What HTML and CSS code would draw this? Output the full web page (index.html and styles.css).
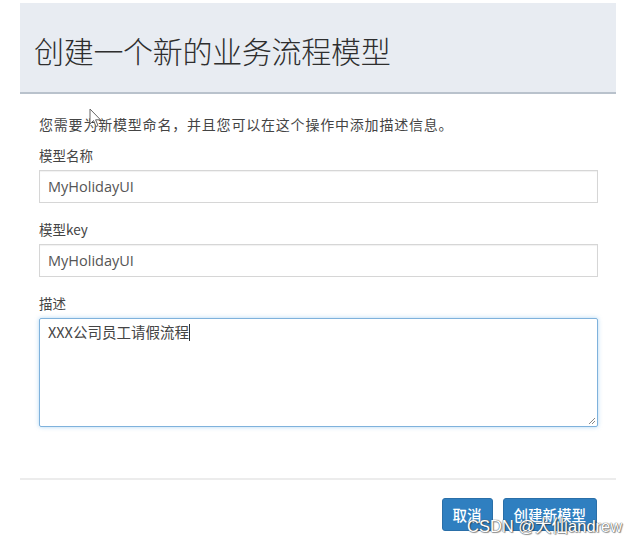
FILE: index.html
```html
<!DOCTYPE html>
<html lang="zh-CN">
<head>
<meta charset="utf-8">
<title>创建一个新的业务流程模型</title>
<link rel="stylesheet" href="styles.css">
</head>
<body>
<div class="modal">
  <div class="modal-header">
    <h1 class="modal-title">创建一个新的业务流程模型</h1>
  </div>
  <div class="modal-body">
    <p class="intro">您需要为新模型命名，并且您可以在这个操作中添加描述信息。</p>
    <div class="group">
      <label class="label">模型名称</label>
      <div class="input">MyHolidayUI</div>
    </div>
    <div class="group">
      <label class="label">模型key</label>
      <div class="input">MyHolidayUI</div>
    </div>
    <div class="group last">
      <label class="label">描述</label>
      <div class="textarea">XXX公司员工请假流程<span class="caret"></span>
        <svg class="grip" width="8" height="8" viewBox="0 0 8 8"><path d="M7 1L1 7M7 4L4 7" stroke="#888" stroke-width="1" fill="none"/></svg>
      </div>
    </div>
  </div>
  <div class="modal-footer">
    <button class="btn">取消</button>
    <button class="btn">创建新模型</button>
  </div>
</div>
<svg class="cursor" width="14" height="20" viewBox="0 0 14 20"><path d="M1 1L1 16L4.5 12.5L7 18.5L9 17.6L6.6 11.8L11.5 11.8Z" fill="#fff" stroke="#666" stroke-width="1"/></svg>
<div class="watermark">CSDN @大仙andrew</div>
</body>
</html>
```
FILE: styles.css
```css
html, body {
  margin: 0;
  padding: 0;
  background: #ffffff;
}
body {
  width: 642px;
  height: 546px;
  overflow: hidden;
  position: relative;
  font-family: "Noto Sans CJK SC", "Open Sans", sans-serif;
  color: #333;
}
.modal {
  margin: 3px 0 0 20px;
  width: 596px;
}
.modal-header {
  background: #e8ecf2;
  border-bottom: 2px solid #b9c2cc;
  display: flex;
  align-items: center;
  padding: 4px 0 0 14px;
  box-sizing: border-box;
  height: 91px;
}
.modal-title {
  margin: 0;
  font-size: 30px;
  font-weight: 300;
  line-height: 36px;
  color: #2e2e2e;
  letter-spacing: -0.3px;
}
.modal-body {
  padding: 20px 18px 0 19px;
}
.intro {
  margin: 0 0 11px 0;
  font-size: 14px;
  line-height: 20px;
  color: #444;
  letter-spacing: 0.8px;
}
.group {
  margin-bottom: 16px;
}
.group.last {
  margin-bottom: 0;
}
.label {
  display: block;
  font-size: 13.5px;
  line-height: 20px;
  color: #444;
  margin-bottom: 5px;
}
.input {
  height: 33px;
  box-sizing: border-box;
  border: 1px solid #d6d6d6;
  box-shadow: inset 0 1px 1px rgba(0,0,0,0.06);
  padding: 0 8px;
  font-family: "Open Sans", "Noto Sans CJK SC", sans-serif;
  font-size: 14.5px;
  line-height: 31px;
  color: #555;
}
.textarea {
  position: relative;
  height: 109px;
  box-sizing: border-box;
  border: 1px solid #7fb2dc;
  border-radius: 2px;
  box-shadow: 0 0 4px rgba(102,175,233,0.5);
  padding: 2px 8px;
  font-size: 14.5px;
  line-height: 22px;
  color: #444;
}
.caret {
  display: inline-block;
  width: 1px;
  height: 17px;
  background: #333;
  vertical-align: -3px;
}
.grip {
  position: absolute;
  right: 1px;
  bottom: 1px;
}
.modal-footer {
  margin-top: 51px;
  border-top: 2px solid #ececec;
  padding: 18px 19px 0 0;
  display: flex;
  justify-content: flex-end;
  gap: 10px;
}
.btn {
  height: 33px;
  padding: 0 10px;
  border: 1px solid #2a6fa8;
  border-radius: 3px;
  background: #2f7fc0;
  color: #fff;
  font-family: "Noto Sans CJK SC", sans-serif;
  font-size: 14.5px;
  font-weight: 500;
  line-height: 31px;
}
.cursor {
  position: absolute;
  left: 89px;
  top: 108px;
}
.watermark {
  position: absolute;
  left: 467px;
  top: 513px;
  font-family: "Liberation Sans", "Noto Sans CJK SC", sans-serif;
  font-size: 16.5px;
  color: #fff;
  text-shadow: 0 0 1px #555, 0 0 1px #555, 1px 1px 1px rgba(0,0,0,0.4);
}
```
